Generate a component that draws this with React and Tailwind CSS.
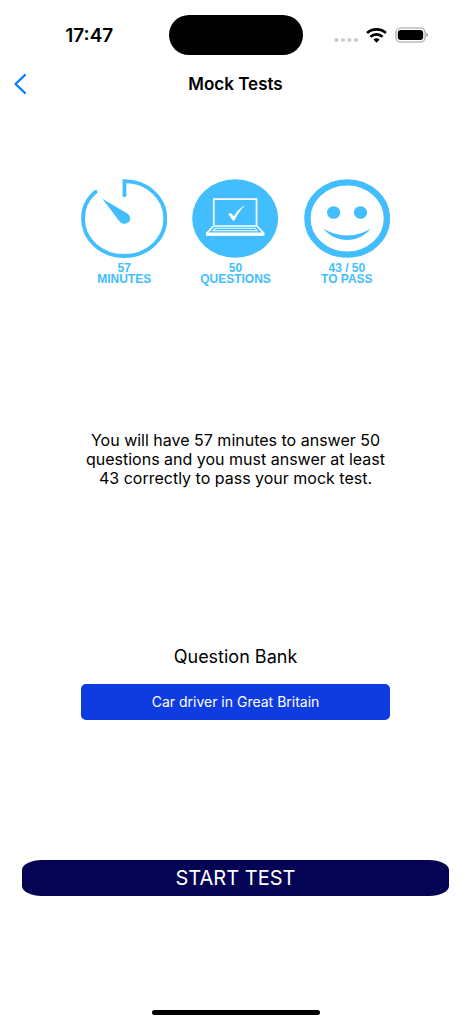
import React from "react";

function StatusBar() {
  return (
    <div className="grid grid-cols-[1fr_134px_1fr] items-center pt-[15px]">
      <div className="pl-[10px] pt-[2px] text-center text-[19px] leading-6 font-semibold">17:47</div>
      <div className="h-10 rounded-full bg-black" />
      <div className="flex items-center justify-center gap-2 pr-[10px]">
        <svg className="mt-[10px] h-[6px] w-6" viewBox="0 0 24 6" fill="#cbcbcb" aria-hidden="true">
          <circle cx="2.5" cy="3" r="2.1" />
          <circle cx="9" cy="3" r="2.1" />
          <circle cx="15.4" cy="3" r="2.1" />
          <circle cx="21.8" cy="3" r="2.1" />
        </svg>
        <svg className="h-[15px] w-[21px]" viewBox="0 0 21 15" aria-hidden="true">
          <g fill="none" stroke="#000" strokeWidth="2.7">
            <path d="M1.1 5.1C6.3 .2 14.7 .2 19.9 5.1" />
            <path d="M4.5 8.7C7.9 5.5 13.1 5.5 16.5 8.7" />
          </g>
          <path d="M7.4 11.5C9.2 9.9 11.8 9.9 13.6 11.5L10.5 14.7Z" fill="#000" />
        </svg>
        <svg className="h-4 w-[34px]" viewBox="0 0 34 16" aria-hidden="true">
          <rect x="0.9" y="1" width="29.2" height="14" rx="4.6" fill="none" stroke="#999" strokeWidth="1.1" />
          <rect x="2.8" y="2.9" width="25.4" height="10.2" rx="3" fill="#000" />
          <path d="M31.4 5.8C33.5 6.4 33.5 9.6 31.4 10.2Z" fill="#999" />
        </svg>
      </div>
    </div>
  );
}

function TimerIcon() {
  return (
    <svg className="h-[79px] w-full" viewBox="0 0 86 79" preserveAspectRatio="none" aria-hidden="true">
      <path
        d="M43.3 16.5V2.2C66 2.2 84 18.7 84 39.5C84 60.5 66 77 43 77C20 77 2 60.5 2 39.5C2 28.5 7 19.2 14.6 12.8"
        fill="none"
        stroke="#42beff"
        strokeWidth="3.8"
      />
      <circle cx="43.3" cy="16.2" r="1.9" fill="#42beff" />
      <circle cx="14.6" cy="12.8" r="1.9" fill="#42beff" />
      <path d="M21.3 19.7L46.2 34.4C49.4 36.8 49.9 40.4 47.6 43C44.9 45.6 40.9 45.4 38.4 42.4Z" fill="#42beff" />
    </svg>
  );
}

function LaptopIcon() {
  return (
    <svg className="h-[79px] w-full" viewBox="0 0 86 79" preserveAspectRatio="none" aria-hidden="true">
      <ellipse cx="43" cy="39.5" rx="42.8" ry="39.2" fill="#42beff" />
      <g fill="none" stroke="#fff" strokeWidth="1.7">
        <path d="M21.7 46V20.2H64.3V46" />
        <path d="M21.5 47H64.7L71.4 54.2V56H14.8V54.2Z" />
      </g>
      <path d="M15 53.6H71.2V56.4H15Z" fill="#fff" />
      <path d="M23.6 49.2H62.5L65 51.7H21Z" fill="none" stroke="#fff" strokeWidth="1" />
      <path d="M36.3 35.2L38.3 33.8L41.6 37.2C44.8 32.2 48.5 28.1 53.3 26C48.7 30.2 45.2 35.3 42.2 41.5H40.5Z" fill="#fff" />
    </svg>
  );
}

function SmileIcon() {
  return (
    <svg className="h-[79px] w-full" viewBox="0 0 86 79" preserveAspectRatio="none" aria-hidden="true">
      <ellipse cx="43" cy="39.5" rx="39.6" ry="36.1" fill="none" stroke="#42beff" strokeWidth="6.4" />
      <g fill="#42beff">
        <ellipse cx="29.5" cy="33.5" rx="6.6" ry="6.3" />
        <ellipse cx="56.3" cy="33.5" rx="6.6" ry="6.3" />
        <path d="M19 49.3C32 58.8 54 58.8 66.7 49.3C55.5 64.8 30.5 64.8 19 49.3Z" />
      </g>
    </svg>
  );
}

function Fact({ icon, value, label }) {
  return (
    <li className="flex flex-col items-center gap-[5px] font-['Liberation_Sans',sans-serif] text-xs leading-[11px] font-bold text-[#42beff]">
      {icon}
      <p className="text-center">
        {value}
        <br />
        {label}
      </p>
    </li>
  );
}

export default function App() {
  return (
    <div className="flex min-h-screen flex-col bg-white font-['Inter',sans-serif] text-black">
      <StatusBar />
      <header className="grid grid-cols-[1fr_auto_1fr] items-center px-3 pt-[17px]">
        <button type="button" aria-label="Back" className="w-4">
          <svg className="h-6 w-4" viewBox="0 0 16 24" fill="none" stroke="#007aff" strokeWidth="2.3" strokeLinecap="round" strokeLinejoin="round" aria-hidden="true">
            <path d="M13 3L3.5 12L13 21" />
          </svg>
        </button>
        <h1 className="text-[17px] leading-6 font-semibold">Mock Tests</h1>
      </header>
      <main className="flex flex-col pt-[83px]">
        <ul className="grid grid-cols-3 gap-[25px] px-[81px]">
          <Fact icon={<TimerIcon />} value="57" label="MINUTES" />
          <Fact icon={<LaptopIcon />} value="50" label="QUESTIONS" />
          <Fact icon={<SmileIcon />} value="43 / 50" label="TO PASS" />
        </ul>
        <p className="mt-[146px] px-[81px] text-center text-base leading-[19px]">
          You will have 57 minutes to answer 50 questions and you must answer at least 43 correctly to pass your mock test.
        </p>
        <section className="mt-[157px] px-[81px] text-center">
          <h2 className="text-lg leading-6">Question Bank</h2>
          <button type="button" className="mt-[15px] h-9 w-full rounded-[5px] bg-[#0f3ce0] text-sm text-white">
            Car driver in Great Britain
          </button>
        </section>
        <div className="mt-[140px] px-[22px]">
          <button type="button" className="h-9 w-full rounded-[20px/10px] bg-[#040354] text-xl leading-9 text-white">
            START TEST
          </button>
        </div>
      </main>
      <footer className="mt-auto flex justify-center pb-[9px]">
        <div className="h-[5px] w-[168px] rounded-full bg-black" />
      </footer>
    </div>
  );
}
